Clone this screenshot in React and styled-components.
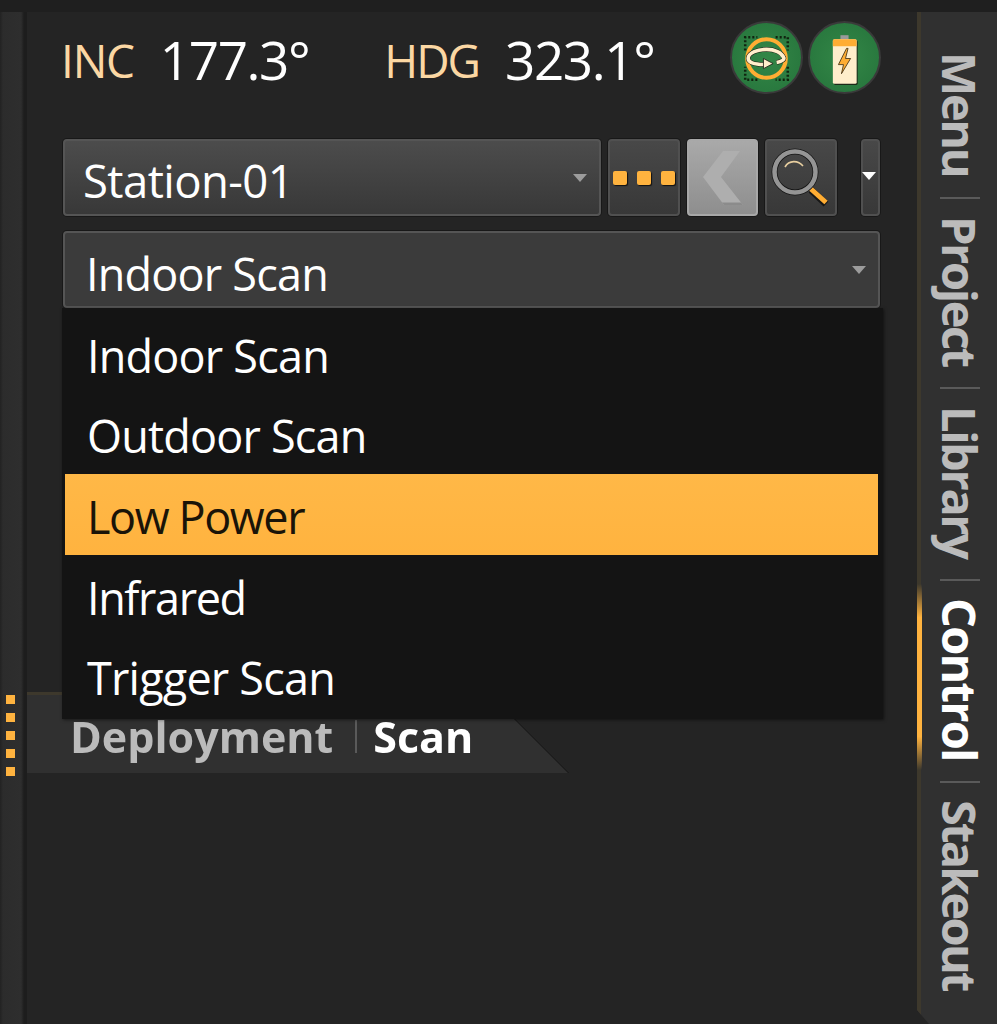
import React from 'react'
import styled, { createGlobalStyle } from 'styled-components'

const FONT = `"Open Sans", "Noto Sans", sans-serif`
const ORANGE = '#ffb33f'

const tabs = [
  { label: 'Menu', tracking: -2.4 },
  { label: 'Project', tracking: -2.4 },
  { label: 'Library', tracking: -2.4 },
  { label: 'Control', tracking: -1.8, active: true },
  { label: 'Stakeout', tracking: -2.8 },
]

const modes = [
  { label: 'Indoor Scan' },
  { label: 'Outdoor Scan' },
  { label: 'Low Power', selected: true, tight: true },
  { label: 'Infrared', tight: true },
  { label: 'Trigger Scan' },
]

const GyroIcon = () => (
  <svg width="73" height="73" viewBox="0 0 72 72">
    <path
      d="M15 29 V16 H27 M45 16 H57 V29 M57 45 V58 H45 M27 58 H15 V45"
      fill="none"
      stroke="#10240f"
      strokeWidth="2.5"
      strokeDasharray="2 2"
    />
    <circle cx="36" cy="37" r="19" fill="none" stroke="#ffad33" strokeWidth="4" />
    <path d="M46 41 C51 40 54 38 53 36 C51 31 44 28 36 28 C27 28 19 31 18 36 C17 41 24 43 34 43" fill="none" stroke="#1a1a12" strokeWidth="4.5" />
    <path d="M46 41 C51 40 54 38 53 36 C51 31 44 28 36 28 C27 28 19 31 18 36 C17 41 24 43 34 43" fill="none" stroke="#ffeecb" strokeWidth="3.5" />
    <path d="M33 37 L42.5 42 L33 47 Z" fill="#ffeecb" stroke="#1a1a12" strokeWidth="0.8" />
  </svg>
)

const BatteryIcon = () => (
  <svg width="73" height="73" viewBox="0 0 72 72">
    <rect x="32" y="14" width="8" height="5" fill="#9a9a9a" />
    <rect x="25.5" y="19" width="23.5" height="44" rx="1.5" fill="#1c2a18" />
    <rect x="24.5" y="18" width="23.5" height="44" rx="1.5" fill="#ffeecb" />
    <path d="M24.5 19.5 a1.5 1.5 0 0 1 1.5 -1.5 h20.5 a1.5 1.5 0 0 1 1.5 1.5 V25 H24.5 Z" fill="#ffad33" />
    <path d="M38 27 L30 43 H35 L33 52 L42 37 H37 L39.5 27 Z" fill="#ffad33" stroke="#3a2a10" strokeWidth="0.8" />
  </svg>
)

const ChevronIcon = () => (
  <svg width="71" height="77" viewBox="0 0 71 77">
    <path d="M53 12 L36 12 L16 38 L37 66 L56 66 L34 38 Z" fill="#aeaeae" />
    <path d="M37 66 L56 66 L54 63.5 L35 63.5 Z" fill="#8b8b8b" />
  </svg>
)

const SearchIcon = () => (
  <svg width="71" height="77" viewBox="0 0 71 77">
    <line x1="46" y1="51" x2="61" y2="65" stroke="#161616" strokeWidth="7" />
    <line x1="46" y1="50" x2="61" y2="63.5" stroke="#ffad33" strokeWidth="5" />
    <circle cx="30" cy="33" r="20.5" fill="none" stroke="#161616" strokeWidth="6" />
    <circle cx="30" cy="33" r="20.5" fill="none" stroke="#959595" strokeWidth="4.5" />
    <path d="M20 28 C24 21 33 21 38 27" fill="none" stroke="#e8cfa0" strokeWidth="1.6" />
  </svg>
)

const App = () => {
  return (
    <Page>
      <GlobalStyle />
      <TopStrip />
      <Body>
        <Rail>
          <Grip>
            {[0, 1, 2, 3, 4].map((i) => <GripDot key={i} />)}
          </Grip>
        </Rail>
        <Main>
          <Readouts>
            <Label>INC</Label>
            <Value>177.3°</Value>
            <Label $gap>HDG</Label>
            <Value>323.1°</Value>
            <StatusGroup>
              <StatusBadge><GyroIcon /></StatusBadge>
              <StatusBadge><BatteryIcon /></StatusBadge>
            </StatusGroup>
          </Readouts>

          <StationRow>
            <Combo $width={538} $top>
              <StationText>Station-01</StationText>
              <Caret />
            </Combo>
            <IconButton>
              <Dot /><Dot /><Dot />
            </IconButton>
            <IconButton $pressed><ChevronIcon /></IconButton>
            <IconButton><SearchIcon /></IconButton>
            <MiniButton><Caret $white /></MiniButton>
          </StationRow>

          <ModeArea>
            <Combo $width={817}>
              <ModeText>Indoor Scan</ModeText>
              <Caret />
            </Combo>
            <Menu>
              {modes.map((m) => (
                <MenuItem key={m.label} $selected={m.selected} $tight={m.tight}>{m.label}</MenuItem>
              ))}
            </Menu>
          </ModeArea>

          <SubTabsEdge>
            <SubTabs>
              <SubTab>Deployment</SubTab>
              <SubDivider />
              <SubTab $active>Scan</SubTab>
            </SubTabs>
          </SubTabsEdge>
        </Main>
        <SideTabs>
          <SideAccent />
          {tabs.map((t, i) => (
            <React.Fragment key={t.label}>
              {i > 0 && <SideDivider />}
              <SideTab $active={t.active} $tracking={t.tracking}>{t.label}</SideTab>
            </React.Fragment>
          ))}
        </SideTabs>
      </Body>
    </Page>
  )
}

export default App

const GlobalStyle = createGlobalStyle`
  html, body {
    margin: 0;
    padding: 0;
    background: #242424;
  }
  * {
    box-sizing: border-box;
  }
`

const Page = styled.div`
  width: 997px;
  height: 1024px;
  overflow: hidden;
  display: flex;
  flex-direction: column;
  background: #242424;
  font-family: ${FONT};
  color: #fff;
`

const TopStrip = styled.div`
  height: 12px;
  flex: none;
  background: #1f1f1f;
`

const Body = styled.div`
  flex: 1;
  display: flex;
  min-height: 0;
`

const Rail = styled.div`
  width: 27px;
  flex: none;
  background: linear-gradient(90deg, #222 0, #2c2c2c 3px, #2e2e2e 21px, #1d1d1d 24px, #1d1d1d 27px);
  padding: 683px 0 0 6px;
`

const Grip = styled.div`
  display: flex;
  flex-direction: column;
  gap: 9px;
`

const GripDot = styled.div`
  width: 9px;
  height: 9px;
  background: ${ORANGE};
`

const Main = styled.div`
  flex: 1;
  min-width: 0;
  padding-left: 36px;
  display: flex;
  flex-direction: column;
`

const Readouts = styled.div`
  height: 127px;
  flex: none;
  padding: 9px 36px 0 0;
  display: flex;
  align-items: flex-start;
`

const Label = styled.div`
  font-size: 46px;
  letter-spacing: ${(p) => (p.$gap ? '-2px' : '-1.2px')};
  line-height: 78px;
  color: #fbd7a3;
  margin-left: ${(p) => (p.$gap ? '75px' : '-2px')};
  margin-right: 26px;
`

const Value = styled.div`
  font-size: 53px;
  letter-spacing: -1.4px;
  line-height: 78px;
  color: #fff;
`

const StatusGroup = styled.div`
  margin-left: auto;
  display: flex;
  gap: 5px;
`

const StatusBadge = styled.div`
  width: 73px;
  height: 73px;
  border-radius: 50%;
  background: radial-gradient(circle, #338747 0, #25733b 100%);
  border: 2px solid #3a3a3a;
  display: flex;
  align-items: center;
  justify-content: center;
  flex: none;
  & > svg {
    flex: none;
  }
`

const StationRow = styled.div`
  display: flex;
  height: 77px;
  gap: 7px;
  flex: none;
`

const Combo = styled.div`
  width: ${(p) => p.$width}px;
  height: 77px;
  flex: none;
  border: 2px solid #555;
  border-radius: 4px;
  background: ${(p) => (p.$top ? 'linear-gradient(180deg, #4c4c4c, #383838)' : '#3b3b3b')};
  box-shadow: 0 0 0 1px #181818;
  padding: 0 12px 0 19px;
  display: flex;
  align-items: center;
  justify-content: space-between;
  font-size: 45px;
  letter-spacing: -0.8px;
`

const StationText = styled.span`
  font-size: 45.5px;
  letter-spacing: -0.6px;
  padding-top: 4px;
  margin-left: -1px;
`

const ModeText = styled.span`
  padding: 8px 0 0 2px;
`

const Caret = styled.div`
  width: 0;
  height: 0;
  flex: none;
  border-left: ${(p) => (p.$white ? 7 : 7)}px solid transparent;
  border-right: ${(p) => (p.$white ? 7 : 7)}px solid transparent;
  border-top: 8px solid ${(p) => (p.$white ? '#fff' : '#9c9c9c')};
`

const IconButton = styled.div`
  width: 71.5px;
  height: 77px;
  flex: none;
  border: 2px solid ${(p) => (p.$pressed ? '#a8a8a8' : '#505050')};
  border-radius: 4px;
  background: ${(p) => (p.$pressed ? 'linear-gradient(180deg, #a9a9a9, #8e8e8e)' : 'linear-gradient(180deg, #484848, #383838)')};
  box-shadow: 0 0 0 1px #181818;
  display: flex;
  align-items: center;
  justify-content: center;
  gap: 10px;
  & > svg {
    flex: none;
    margin: -2px;
  }
`

const Dot = styled.div`
  width: 14px;
  height: 14px;
  border-radius: 2px;
  background: ${ORANGE};
  box-shadow: 1px 1px 1px #111;
  flex: none;
`

const MiniButton = styled.div`
  width: 19px;
  height: 77px;
  flex: none;
  margin-left: 17.5px;
  border: 2px solid #505050;
  border-radius: 4px;
  background: linear-gradient(180deg, #484848, #383838);
  box-shadow: 0 0 0 1px #181818;
  display: flex;
  align-items: center;
  justify-content: center;
  padding: 0 4px 4px 0;
`

const ModeArea = styled.div`
  position: relative;
  margin-top: 15px;
  height: 77px;
  flex: none;
`

const Menu = styled.div`
  position: absolute;
  top: 77px;
  left: -1px;
  width: 821px;
  height: 411px;
  z-index: 2;
  background: #141414;
  padding: 5px 5px 0 3px;
  box-shadow: 1px 1px 3px rgba(0, 0, 0, 0.5);
`

const MenuItem = styled.div`
  height: 80.6px;
  padding: 4px 0 0 22px;
  display: flex;
  align-items: center;
  font-size: 45px;
  letter-spacing: ${(p) => (p.$tight ? '-1.4px' : '-0.8px')};
  color: ${(p) => (p.$selected ? '#1a1408' : '#fff')};
  background: ${(p) => (p.$selected ? 'linear-gradient(180deg, #ffb847, #ffb33f)' : 'transparent')};
`

const SubTabsEdge = styled.div`
  margin-top: 384px;
  margin-left: -36px;
  width: 542px;
  flex: none;
  filter: drop-shadow(1px 0 0 #141414);
`

const SubTabs = styled.div`
  height: 81px;
  width: 541px;
  padding: 5px 0 0 43px;
  display: flex;
  align-items: center;
  background: #303030;
  border-top: 3px solid #3d382c;
  clip-path: polygon(0 0, 460px 0, 100% 100%, 0 100%);
`

const SubTab = styled.div`
  font-size: 43px;
  font-weight: 700;
  line-height: 60px;
  color: ${(p) => (p.$active ? '#fff' : '#bbb')};
`

const SubDivider = styled.div`
  width: 2px;
  height: 33px;
  margin: 0 16px 0 22px;
  background: #5a5a5a;
`

const SideTabs = styled.div`
  position: relative;
  width: 80px;
  flex: none;
  padding: 40px 0 0 16px;
  display: flex;
  flex-direction: column;
  align-items: flex-start;
  background: #303030;
  border-left: 4px solid #3d382c;
  clip-path: polygon(0 0, 100% 0, 100% 100%, 12px 100%, 0 998px);
`

const SideAccent = styled.div`
  position: absolute;
  left: -4px;
  top: 572px;
  width: 5px;
  height: 186px;
  background: linear-gradient(180deg, transparent, ${ORANGE} 18%, ${ORANGE} 82%, transparent);
`

const SideTab = styled.div`
  writing-mode: vertical-rl;
  font-size: 47px;
  letter-spacing: ${(p) => p.$tracking}px;
  font-weight: 700;
  line-height: 46px;
  color: ${(p) => (p.$active ? '#fff' : '#bbb')};
`

const SideDivider = styled.div`
  width: 40px;
  height: 2px;
  margin: 21px 0 17px 3px;
  background: #5a5a5a;
`
